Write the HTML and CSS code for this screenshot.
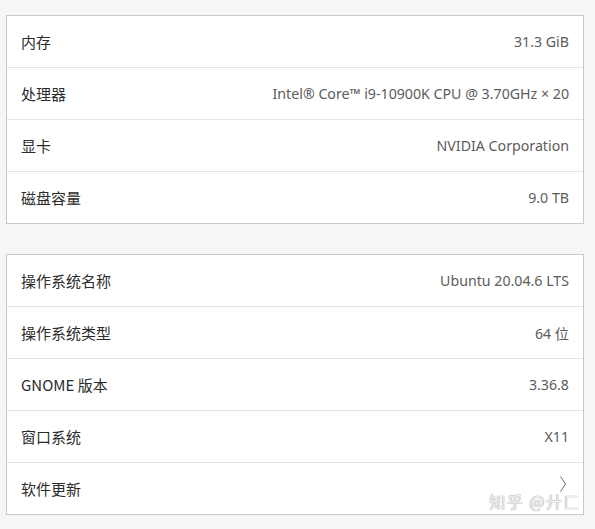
FILE: index.html
```html
<!DOCTYPE html>
<html lang="zh-CN">
<head>
<meta charset="utf-8">
<title>关于</title>
<link rel="stylesheet" href="styles.css">
</head>
<body>
<main class="page">
  <section class="card">
    <div class="row"><span class="label">内存</span><span class="value">31.3 GiB</span></div>
    <div class="row"><span class="label">处理器</span><span class="value">Intel® Core™ i9-10900K CPU @ 3.70GHz × 20</span></div>
    <div class="row"><span class="label">显卡</span><span class="value">NVIDIA Corporation</span></div>
    <div class="row"><span class="label">磁盘容量</span><span class="value">9.0 TB</span></div>
  </section>
  <section class="card">
    <div class="row"><span class="label">操作系统名称</span><span class="value">Ubuntu 20.04.6 LTS</span></div>
    <div class="row"><span class="label">操作系统类型</span><span class="value">64 位</span></div>
    <div class="row"><span class="label">GNOME 版本</span><span class="value">3.36.8</span></div>
    <div class="row"><span class="label">窗口系统</span><span class="value">X11</span></div>
    <div class="row"><span class="label">软件更新</span>
      <svg class="chevron" width="8" height="18" viewBox="0 0 8 18"><path d="M1.5 1.5 L6.5 9 L1.5 16.5" fill="none" stroke="#6a6a6a" stroke-width="1"/></svg>
    </div>
    <span class="watermark">知乎 @廾匚</span>
  </section>
</main>
</body>
</html>
```
FILE: styles.css
```css
html, body {
  margin: 0;
  padding: 0;
  background: #f6f6f6;
}
.page {
  padding: 15px 11px 15px 6px;
  display: flex;
  flex-direction: column;
  gap: 30px;
  font-family: "Noto Sans", "Noto Sans CJK SC", sans-serif;
}
.card {
  position: relative;
  background: #ffffff;
  border: 1px solid #c9c9c9;
  display: flex;
  flex-direction: column;
}
.row {
  height: 51px;
  display: flex;
  align-items: center;
  justify-content: space-between;
  padding: 0 14px 0 14px;
  border-top: 1px solid #e4e4e4;
}
.row:first-child {
  border-top: none;
}
.label {
  font-family: "Noto Sans CJK SC", "Noto Sans", sans-serif;
  font-size: 15px;
  color: #2b2b2b;
}
.value {
  font-size: 14.2px;
  color: #5c5c5c;
  font-family: "Noto Sans", "Noto Sans CJK SC", sans-serif;
}
.chevron {
  margin-right: 2px;
  margin-top: -10px;
}
.watermark {
  position: absolute;
  right: 2px;
  bottom: 1px;
  font-family: "Noto Sans CJK SC", sans-serif;
  font-size: 16px;
  color: #f0f0f0;
  letter-spacing: 1.5px;
  text-shadow: 0 0 1px #a0a0a0, 0 0 1px #a0a0a0;
}
```
